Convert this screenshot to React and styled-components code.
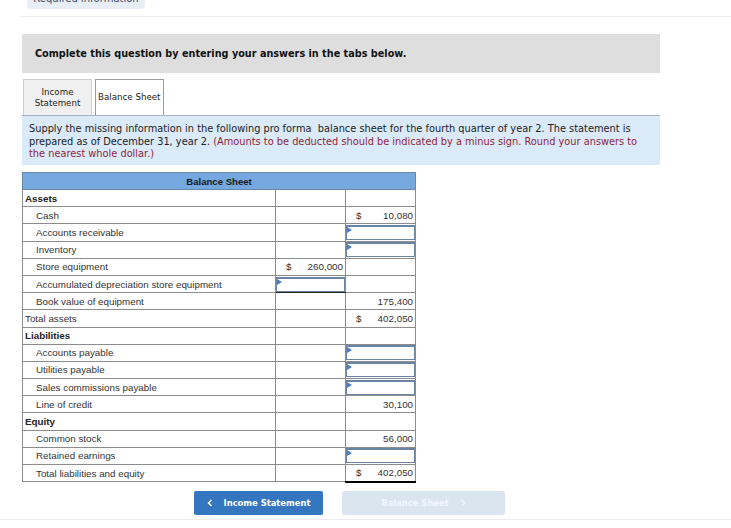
import React from 'react'
import styled, { createGlobalStyle } from 'styled-components'

const GlobalStyle = createGlobalStyle`
  html, body {
    margin: 0;
    padding: 0;
    background: #fff;
    overflow: hidden;
  }
  body {
    font-family: "DejaVu Sans", Verdana, sans-serif;
    color: #222;
  }
`

const rows = [
  { label: 'Assets', head: true },
  { label: 'Cash', indent: true, c3: { dollar: true, value: '10,080' } },
  { label: 'Accounts receivable', indent: true, c3: { input: true } },
  { label: 'Inventory', indent: true, c3: { input: true } },
  { label: 'Store equipment', indent: true, c2: { dollar: true, value: '260,000' } },
  { label: 'Accumulated depreciation store equipment', indent: true, c2: { input: true, underline: true } },
  { label: 'Book value of equipment', indent: true, c3: { value: '175,400' } },
  { label: 'Total assets', c3: { dollar: true, value: '402,050' } },
  { label: 'Liabilities', head: true },
  { label: 'Accounts payable', indent: true, c3: { input: true } },
  { label: 'Utilities payable', indent: true, c3: { input: true } },
  { label: 'Sales commissions payable', indent: true, c3: { input: true } },
  { label: 'Line of credit', indent: true, c3: { value: '30,100' } },
  { label: 'Equity', head: true },
  { label: 'Common stock', indent: true, c3: { value: '56,000' } },
  { label: 'Retained earnings', indent: true, c3: { input: true } },
  { label: 'Total liabilities and equity', indent: true, c3: { dollar: true, value: '402,050', total: true } },
]

function Amount({ cell }) {
  if (!cell) return <AmountCell />
  if (cell.input) {
    return (
      <AmountCell underline={cell.underline}>
        <InputBox>
          <Marker />
        </InputBox>
      </AmountCell>
    )
  }
  return (
    <AmountCell total={cell.total}>
      <AmountInner>
        <span>{cell.dollar ? '$' : ''}</span>
        <span>{cell.value}</span>
      </AmountInner>
    </AmountCell>
  )
}

export default function App() {
  return (
    <Page>
      <GlobalStyle />
      <TopBar>
        <TopTab><span>Required information</span></TopTab>
      </TopBar>

      <Content>
        <Instruction>Complete this question by entering your answers in the tabs below.</Instruction>

        <Tabs>
          <Tab>Income<br />Statement</Tab>
          <Tab active>Balance Sheet</Tab>
        </Tabs>

        <InfoBox>
          Supply the missing information in the following pro forma&nbsp; balance sheet for the fourth quarter of year 2. The statement is<br />
          prepared as of December 31, year 2. <Red>(Amounts to be deducted should be indicated by a minus sign. Round your answers to<br />
          the nearest whole dollar.)</Red>
        </InfoBox>

        <Sheet>
          <colgroup>
            <col style={{ width: 253 }} />
            <col style={{ width: 70 }} />
            <col style={{ width: 70 }} />
          </colgroup>
          <thead>
            <tr>
              <HeaderCell colSpan={3}>Balance Sheet</HeaderCell>
            </tr>
          </thead>
          <tbody>
            {rows.map((r) => (
              <Row key={r.label}>
                <LabelCell head={r.head} indent={r.indent}>{r.label}</LabelCell>
                <Amount cell={r.c2} />
                <Amount cell={r.c3} />
              </Row>
            ))}
          </tbody>
        </Sheet>

        <NavRow>
          <NavButton>
            <Chevron viewBox="0 0 8 10"><path d="M6 1 L2 5 L6 9" /></Chevron>
            Income Statement
          </NavButton>
          <NavButton disabled wide>
            Balance Sheet
            <Chevron viewBox="0 0 8 10"><path d="M2 1 L6 5 L2 9" /></Chevron>
          </NavButton>
        </NavRow>
      </Content>
      <BottomLine />
    </Page>
  )
}

const Page = styled.div`
  width: 731px;
  height: 528px;
  overflow: hidden;
`

const TopBar = styled.div`
  height: 16px;
  margin-left: 20px;
  border-bottom: 1px solid #ececec;
`

const TopTab = styled.div`
  width: 118px;
  margin-left: 7px;
  height: 9px;
  overflow: hidden;
  display: flex;
  align-items: flex-end;
  justify-content: center;
  background: #e7eef6;
  border-radius: 0 0 4px 4px;
  font-size: 10px;
  line-height: 10px;
  color: #3a4c66;

  span {
    display: block;
    margin-bottom: 5px;
  }
`

const Content = styled.div`
  padding-left: 22px;
  width: 638px;
`

const Instruction = styled.div`
  margin-top: 17px;
  height: 39px;
  background: #dedede;
  display: flex;
  align-items: center;
  padding-left: 13px;
  font-size: 9.7px;
  font-weight: bold;
  color: #111;
`

const Tabs = styled.div`
  display: flex;
  gap: 3px;
  margin-top: 6px;
  padding-left: 1px;
  height: 36px;
`

const Tab = styled.div`
  width: 69px;
  box-sizing: border-box;
  display: flex;
  align-items: center;
  justify-content: ${(p) => (p.active ? 'flex-start' : 'center')};
  text-align: center;
  white-space: nowrap;
  padding-left: ${(p) => (p.active ? '2px' : '0')};
  font-size: 8.7px;
  line-height: 11px;
  color: #222;
  background: ${(p) => (p.active ? '#fff' : '#f0f0f0')};
  border: 1px solid ${(p) => (p.active ? '#9a9a9a' : '#cfcfcf')};
  border-bottom: none;
`

const InfoBox = styled.div`
  height: 50px;
  box-sizing: border-box;
  background: #dbeaf9;
  border-top: 1px solid #a9b4c0;
  padding: 7px 6px 0 7px;
  font-size: 9.8px;
  line-height: 12.5px;
  white-space: nowrap;
  color: #222;
`

const Red = styled.span`
  color: #8e1f3c;
`

const Sheet = styled.table`
  margin-top: 7px;
  width: 393px;
  table-layout: fixed;
  border-collapse: collapse;
  font-family: "Liberation Sans", Arial, sans-serif;
  font-size: 9.8px;
  color: #333;
`

const HeaderCell = styled.th`
  height: 16px;
  padding: 0;
  background: #74a8df;
  border: 1px solid #6a86a8;
  font-weight: bold;
  font-size: 9.6px;
  color: #1a1a1a;
  text-align: center;
`

const Row = styled.tr`
  height: 17.2px;
`

const LabelCell = styled.td`
  padding: 0 0 0 ${(p) => (p.indent ? '13px' : '2px')};
  border: 1px solid #8c8c8c;
  font-weight: ${(p) => (p.head ? 'bold' : 'normal')};
  color: ${(p) => (p.head ? '#222' : '#333')};
  white-space: nowrap;
  line-height: 11px;
`

const AmountCell = styled.td`
  padding: 0;
  border: 1px solid #8c8c8c;
  border-bottom: ${(p) => (p.total ? '2px solid #000' : p.underline ? '1px solid #222' : '1px solid #8c8c8c')};
  line-height: 11px;
`

const AmountInner = styled.div`
  display: flex;
  justify-content: space-between;
  padding: 0 2px 0 10px;
`

const InputBox = styled.div`
  position: relative;
  height: 12px;
  border: 1px solid #6b84a3;
  border-top-width: 2px;
  background: #fff;
`

const Marker = styled.span`
  position: absolute;
  top: 0;
  left: 0;
  width: 0;
  height: 0;
  border-left: 5px solid #4a7fc4;
  border-top: 3px solid transparent;
  border-bottom: 3px solid transparent;
`

const NavRow = styled.div`
  display: flex;
  gap: 19px;
  margin-top: 8px;
  padding-left: 172px;
`

const NavButton = styled.div`
  width: ${(p) => (p.wide ? '163px' : '129px')};
  height: 24px;
  border-radius: 2px;
  display: flex;
  align-items: center;
  justify-content: center;
  gap: 11px;
  background: ${(p) => (p.disabled ? '#dbe5f0' : '#3576c1')};
  color: ${(p) => (p.disabled ? '#f3f6fa' : '#fff')};
  font-size: 8.4px;
  font-weight: bold;
`

const Chevron = styled.svg`
  width: 6px;
  height: 8px;
  fill: none;
  stroke: currentColor;
  stroke-width: 2;
`

const BottomLine = styled.div`
  margin-top: 4px;
  height: 1px;
  background: #ececec;
`
